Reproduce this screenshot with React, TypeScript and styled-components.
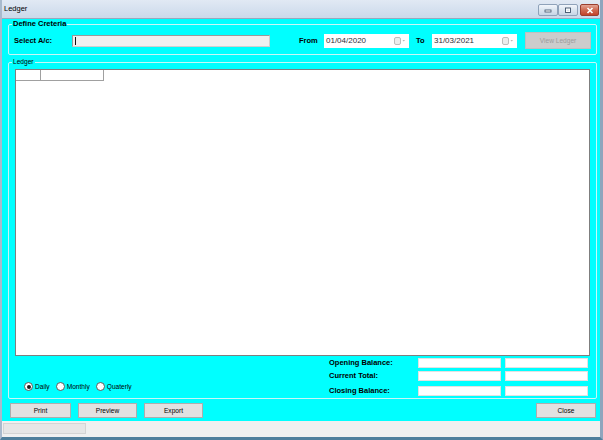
import { FC } from 'react';
import styled, { createGlobalStyle } from 'styled-components';

const Global = createGlobalStyle`
  body{
    margin: 0;
    overflow: hidden;
    background: #fff;
    font-family: "Liberation Sans", Arial, sans-serif;
  }
`

const Window = styled.div`
  width: 603px;
  height: 440px;
  box-sizing: border-box;
  display: flex;
  flex-direction: column;
  border-left: 2px solid #a9bacd;
  border-right: 3px solid #8ea5bd;
  border-bottom: 3px solid #4f7f9c;
  background: #d6e2ef;
`

const TitleBar = styled.div`
  height: 19px;
  flex: none;
  box-sizing: border-box;
  display: flex;
  align-items: flex-start;
  padding: 0 1px 0 2px;
  background: linear-gradient(#e1e9f4, #cbd9ea);
  border-bottom: 1px solid #97a9bd;
  .title{
    flex: 1;
    font-size: 7.5px;
    line-height: 18px;
    color: #000;
  }
  .controls{
    display: flex;
    gap: 2px;
    margin-top: 4px;
  }
  .pair{
    display: flex;
  }
`

const CtrlButton = styled.div<{ $close?: boolean; $w: number }>`
  width: ${p => p.$w}px;
  height: 12px;
  box-sizing: border-box;
  display: flex;
  align-items: center;
  justify-content: center;
  border: 1px solid ${p => (p.$close ? '#9a3e2e' : '#8fa2b9')};
  border-radius: 2px;
  background: ${p =>
    p.$close
      ? 'linear-gradient(#e3a596, #cf6a52 50%, #c2432b)'
      : 'linear-gradient(#f2f6fb, #dae4ef 50%, #c9d6e6)'};
`

const Client = styled.div`
  flex: 1;
  min-height: 0;
  display: flex;
  flex-direction: column;
  padding: 1px 3px 3px 6px;
  background: #00ffff;
`

const Group = styled.fieldset<{ $grow?: boolean; $pad: string }>`
  margin: 0;
  min-width: 0;
  min-height: 0;
  padding: ${p => p.$pad};
  border: 1px solid #c9f6f6;
  border-radius: 2px;
  display: flex;
  flex-direction: column;
  flex: ${p => (p.$grow ? 1 : 'none')};
  & + &{
    margin-top: 3px;
  }
`

const Caption = styled.legend<{ $bold?: boolean; $indent: number }>`
  padding: 0 1px;
  margin-left: ${p => p.$indent}px;
  font-size: ${p => (p.$bold ? '7.5px' : '6.6px')};
  font-weight: ${p => (p.$bold ? 'bold' : 'normal')};
  line-height: 8px;
  color: #000;
`

const CriteriaRow = styled.div`
  display: flex;
  align-items: center;
  height: 17px;
`

const FieldLabel = styled.span<{ $w: number; $ml?: number }>`
  flex: none;
  width: ${p => p.$w}px;
  margin-left: ${p => p.$ml ?? 0}px;
  font-size: 7.5px;
  font-weight: bold;
  color: #000;
`

const AccountBox = styled.div`
  width: 198px;
  height: 12px;
  box-sizing: border-box;
  flex: none;
  padding: 1px 0 0 2px;
  background: #f0f0f0;
  border: 1px solid #a3a3a3;
  border-color: #9a9a9a #cfcfcf #cfcfcf #9a9a9a;
  .caret{
    width: 1px;
    height: 8px;
    background: #111;
  }
`

const DateBox = styled.div`
  width: 85px;
  height: 14px;
  box-sizing: border-box;
  flex: none;
  display: flex;
  align-items: center;
  padding: 0 3px 0 2px;
  background: #fff;
  font-size: 8px;
  color: #2e2e38;
  span{
    flex: 1;
  }
`

const DisabledButton = styled.div`
  width: 69px;
  height: 17px;
  box-sizing: border-box;
  margin-left: 8px;
  display: flex;
  align-items: center;
  justify-content: center;
  background: #cccccc;
  border: 1px solid #bfbfbf;
  font-size: 6.6px;
  color: #9c9c9c;
`

const Grid = styled.div`
  flex: 1;
  min-height: 0;
  background: #fff;
  border: 1px solid #7f7f7f;
  .head{
    display: flex;
  }
`

const HeaderCell = styled.div<{ $w: number }>`
  width: ${p => p.$w}px;
  height: 11px;
  box-sizing: border-box;
  border-right: 1px solid #a0a0a0;
  border-bottom: 1px solid #a0a0a0;
  background: #fff;
`

const Footer = styled.div`
  flex: none;
  display: flex;
  margin-top: 2px;
`

const Options = styled.div`
  flex: 1;
  display: flex;
  align-items: flex-end;
  gap: 6px;
  padding: 0 0 5px 9px;
`

const Radio = styled.label<{ $checked?: boolean }>`
  display: flex;
  align-items: center;
  gap: 2px;
  font-size: 6.6px;
  color: #000;
  .dot{
    width: 9px;
    height: 9px;
    box-sizing: border-box;
    border-radius: 50%;
    border: 1px solid #5a5a5a;
    background: #fff;
    display: flex;
    align-items: center;
    justify-content: center;
    &::after{
      content: '';
      width: 4px;
      height: 4px;
      border-radius: 50%;
      background: ${p => (p.$checked ? '#1a1a1a' : 'transparent')};
    }
  }
`

const Balances = styled.div`
  display: flex;
  flex-direction: column;
  margin-right: 2px;
`

const BalanceRow = styled.div<{ $mt: number }>`
  display: grid;
  grid-template-columns: 89px 83px 83px;
  column-gap: 4px;
  height: 10px;
  margin-top: ${p => p.$mt}px;
  span{
    padding-left: 4px;
    font-size: 7.5px;
    font-weight: bold;
    line-height: 10px;
    color: #000;
  }
`

const ValueBox = styled.div`
  height: 10px;
  box-sizing: border-box;
  background: #fff;
  border: 1px solid #e2e2e2;
`

const ButtonRow = styled.div`
  flex: none;
  display: flex;
  gap: 7px;
  height: 15px;
  margin-top: 4px;
  padding-left: 2px;
  .spacer{
    flex: 1;
  }
`

const PushButton = styled.button<{ $w: number }>`
  width: ${p => p.$w}px;
  height: 15px;
  padding: 0;
  margin: 0;
  box-sizing: border-box;
  background: #e1e1e1;
  border: 1px solid #adadad;
  font-family: "Liberation Sans", Arial, sans-serif;
  font-size: 6.6px;
  color: #000;
  &:last-child{
    margin-right: 1px;
  }
`

const StatusBar = styled.div`
  height: 16px;
  flex: none;
  box-sizing: border-box;
  padding: 2px 1px;
  background: #f0f0f0;
  .panel{
    width: 83px;
    height: 11px;
    box-sizing: border-box;
    background: #e6e6e6;
    border: 1px solid #d4d4d4;
  }
`

const CalendarGlyph: FC = () => (
  <svg width="12" height="8" viewBox="0 0 12 8">
    <rect x="0.5" y="0.5" width="6" height="7" rx="1.5" fill="#ededed" stroke="#bdbdbd" />
    <path d="M8.5 3 L11 3 L9.75 4.5 Z" fill="#b5b5b5" />
  </svg>
)

const DatePicker: FC<{ value: string }> = ({ value }) => (
  <DateBox>
    <span>{value}</span>
    <CalendarGlyph />
  </DateBox>
)

const balances = [
  { label: 'Opening Balance:', mt: 0 },
  { label: 'Current Total:', mt: 3 },
  { label: 'Closing Balance:', mt: 5 },
]

export default function App() {
  return (
    <>
      <Global />
      <Window>
        <TitleBar>
          <span className="title">Ledger</span>
          <div className="controls">
            <div className="pair">
              <CtrlButton $w={20}>
                <svg width="8" height="6" viewBox="0 0 8 6">
                  <rect x="1" y="3" width="6" height="2" fill="#fff" stroke="#3d5068" strokeWidth="0.8" />
                </svg>
              </CtrlButton>
              <CtrlButton $w={20}>
                <svg width="8" height="7" viewBox="0 0 8 7">
                  <rect x="1.5" y="1" width="5" height="4.5" fill="#fff" stroke="#3d5068" strokeWidth="0.9" />
                  <rect x="2.7" y="2.6" width="2.6" height="1.6" fill="#d9e3ee" />
                </svg>
              </CtrlButton>
            </div>
            <CtrlButton $close $w={19}>
              <svg width="8" height="7" viewBox="0 0 8 7">
                <path d="M1.5 1 L6.5 6 M6.5 1 L1.5 6" stroke="#fff" strokeWidth="1.6" />
              </svg>
            </CtrlButton>
          </div>
        </TitleBar>

        <Client>
          <Group $pad="4px 5px 5px 5px">
            <Caption $bold $indent={-2}>Define Creteria</Caption>
            <CriteriaRow>
              <FieldLabel $w={58}>Select A/c:</FieldLabel>
              <AccountBox><div className="caret" /></AccountBox>
              <FieldLabel $w={25} $ml={29}>From</FieldLabel>
              <DatePicker value="01/04/2020" />
              <FieldLabel $w={16} $ml={7}>To</FieldLabel>
              <DatePicker value="31/03/2021" />
              <DisabledButton>View Ledger</DisabledButton>
            </CriteriaRow>
          </Group>

          <Group $grow $pad="3px 6px 2px 6px">
            <Caption $indent={-3}>Ledger</Caption>
            <Grid>
              <div className="head">
                <HeaderCell $w={25} />
                <HeaderCell $w={63} />
              </div>
            </Grid>
            <Footer>
              <Options>
                <Radio $checked><span className="dot" />Daily</Radio>
                <Radio><span className="dot" />Monthly</Radio>
                <Radio><span className="dot" />Quaterly</Radio>
              </Options>
              <Balances>
                {balances.map(b => (
                  <BalanceRow key={b.label} $mt={b.mt}>
                    <span>{b.label}</span>
                    <ValueBox />
                    <ValueBox />
                  </BalanceRow>
                ))}
              </Balances>
            </Footer>
          </Group>

          <ButtonRow>
            <PushButton $w={61}>Print</PushButton>
            <PushButton $w={59}>Preview</PushButton>
            <PushButton $w={59}>Export</PushButton>
            <div className="spacer" />
            <PushButton $w={60}>Close</PushButton>
          </ButtonRow>
        </Client>

        <StatusBar>
          <div className="panel" />
        </StatusBar>
      </Window>
    </>
  )
}
